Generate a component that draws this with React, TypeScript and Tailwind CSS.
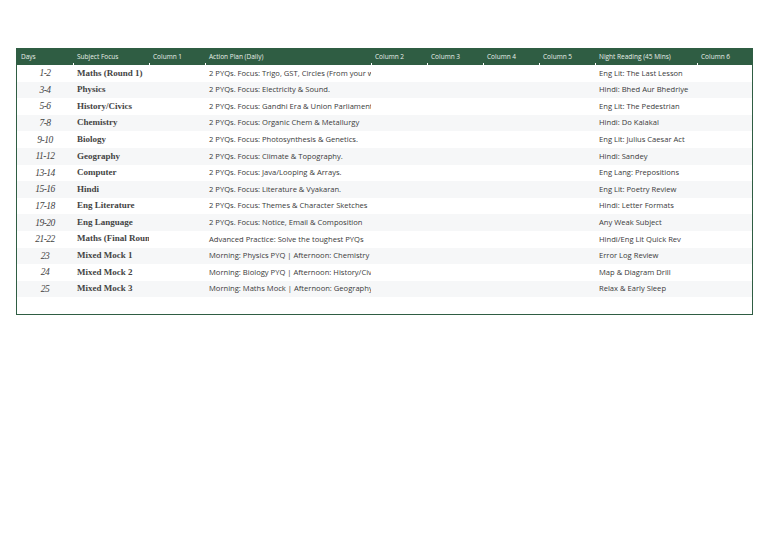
const cols = [
  { h: "Days", w: 56 },
  { h: "Subject Focus", w: 76 },
  { h: "Column 1", w: 56 },
  { h: "Action Plan (Daily)", w: 166 },
  { h: "Column 2", w: 56 },
  { h: "Column 3", w: 56 },
  { h: "Column 4", w: 56 },
  { h: "Column 5", w: 56 },
  { h: "Night Reading (45 Mins)", w: 102 },
  { h: "Column 6", w: 56 },
];
const rows: [string, string, string, string][] = [
  ["1-2", "Maths (Round 1)", "2 PYQs. Focus: Trigo, GST, Circles (From your weak list)", "Eng Lit: The Last Lesson"],
  ["3-4", "Physics", "2 PYQs. Focus: Electricity & Sound.", "Hindi: Bhed Aur Bhedriye"],
  ["5-6", "History/Civics", "2 PYQs. Focus: Gandhi Era & Union Parliament", "Eng Lit: The Pedestrian"],
  ["7-8", "Chemistry", "2 PYQs. Focus: Organic Chem & Metallurgy", "Hindi: Do Kalakal"],
  ["9-10", "Biology", "2 PYQs. Focus: Photosynthesis & Genetics.", "Eng Lit: Julius Caesar Act"],
  ["11-12", "Geography", "2 PYQs. Focus: Climate & Topography.", "Hindi: Sandey"],
  ["13-14", "Computer", "2 PYQs. Focus: Java/Looping & Arrays.", "Eng Lang: Prepositions"],
  ["15-16", "Hindi", "2 PYQs. Focus: Literature & Vyakaran.", "Eng Lit: Poetry Review"],
  ["17-18", "Eng Literature", "2 PYQs. Focus: Themes & Character Sketches", "Hindi: Letter Formats"],
  ["19-20", "Eng Language", "2 PYQs. Focus: Notice, Email & Composition", "Any Weak Subject"],
  ["21-22", "Maths (Final Round)", "Advanced Practice: Solve the toughest PYQs", "Hindi/Eng Lit Quick Rev"],
  ["23", "Mixed Mock 1", "Morning: Physics PYQ | Afternoon: Chemistry", "Error Log Review"],
  ["24", "Mixed Mock 2", "Morning: Biology PYQ | Afternoon: History/Civics", "Map & Diagram Drill"],
  ["25", "Mixed Mock 3", "Morning: Maths Mock | Afternoon: Geography", "Relax & Early Sleep"],
];
const sans = { fontFamily: "'Open Sans', sans-serif" };
const serif = { fontFamily: "'Liberation Serif', serif" };
export default function App() {
  return (
    <div className="w-[768px] h-[543px] bg-white pt-[48px] pl-[16px]">
      <div className="w-[737px] h-[267px] border border-[#2f5d43] overflow-hidden">
        <div className="flex h-[16px] bg-[#2f5d43] text-[#e8efe9] text-[6.5px]" style={sans}>
          {cols.map((c, i) => (
            <div key={i} className="relative flex items-center px-[4px] shrink-0" style={{ width: c.w }}>
              {c.h}
              {i > 0 && <span className="absolute left-0 bottom-0 w-px h-[2px] bg-white" />}
            </div>
          ))}
        </div>
        {rows.map((r, i) => (
          <div key={i} className={`flex h-[16.6px] items-center text-[7.6px] text-[#3a3a3a] ${i % 2 ? "bg-[#f6f7f8]" : "bg-white"}`}>
            <div className="w-[56px] shrink-0 text-center italic text-[9.5px] text-[#444] tracking-[-0.5px]" style={serif}>{r[0]}</div>
            <div className="w-[76px] shrink-0 px-[4px] font-bold text-[9px] whitespace-nowrap overflow-hidden text-[#444]" style={serif}>{r[1]}</div>
            <div className="w-[56px] shrink-0" />
            <div className="w-[166px] shrink-0 px-[4px] whitespace-nowrap overflow-hidden" style={sans}>{r[2]}</div>
            <div className="w-[224px] shrink-0" />
            <div className="w-[102px] shrink-0 px-[4px] whitespace-nowrap overflow-hidden" style={sans}>{r[3]}</div>
            <div className="w-[56px] shrink-0" />
          </div>
        ))}
      </div>
    </div>
  );
}
